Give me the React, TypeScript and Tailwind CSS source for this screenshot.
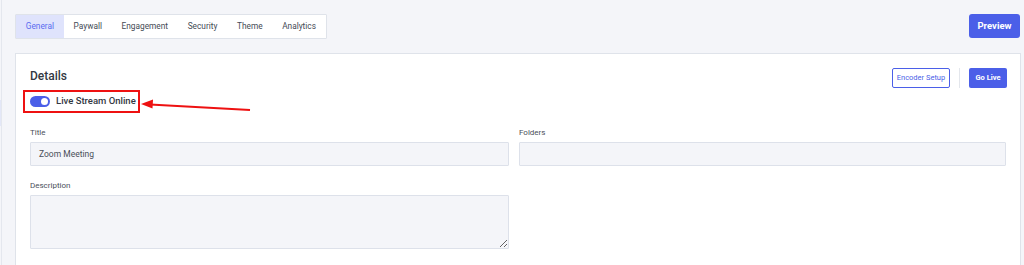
import React from 'react';

const tabs = ['General', 'Paywall', 'Engagement', 'Security', 'Theme', 'Analytics'];

const Field: React.FC<{ label: string; value?: string }> = ({ label, value }) => (
  <div className="flex flex-col">
    <label className="text-[8px] text-[#4a4f5a] mb-[3px] leading-[12px]">{label}</label>
    <div className="h-[24px] bg-[#f4f5f9] border border-[#dde1ea] rounded-[1px] px-[8px] flex items-center text-[8.5px] text-[#4a4f5a]">
      {value}
    </div>
  </div>
);

export default function App() {
  return (
    <div
      className="relative flex w-[1024px] h-[265px] overflow-hidden bg-[#f4f5f9]"
      style={{ fontFamily: 'Roboto, "Noto Sans", sans-serif' }}
    >
      {/* sidebar edge */}
      <div className="w-[2px] shrink-0 flex flex-col border-r border-[#e4e7ee]">
        <div className="h-[100px]" />
        <div className="h-[26px] bg-[#e3e7f7]" />
      </div>

      <div className="flex-1 flex flex-col pl-[13px] pr-[3px] pt-[14px]">
        {/* top bar */}
        <div className="flex items-start justify-between pr-[1px]">
          <div className="flex h-[25px] bg-white border border-[#dfe3ea] rounded-[1px]">
            {tabs.map((t, i) => (
              <div
                key={t}
                className={`flex items-center px-[9.8px] text-[8.3px] ${
                  i === 0 ? 'bg-[#dfe3fc] text-[#5a6cf0]' : 'text-[#444a55]'
                }`}
              >
                {t}
              </div>
            ))}
          </div>
          <button className="h-[24px] w-[51px] bg-[#4b5fe8] text-white text-[9.5px] font-bold rounded-[3px]">
            Preview
          </button>
        </div>

        {/* card */}
        <div className="mt-[14px] min-h-[240px] bg-white border border-[#dfe3ea] pl-[14px] pr-[14px] pt-[13px]">
          <div className="flex items-start justify-between">
            <div className="flex flex-col">
              <h2 className="text-[12px] font-medium text-[#333842] leading-[16px] mt-[1px]">Details</h2>
              <div className="mt-[6px] -ml-[7px] w-[117px] h-[23px] border-2 border-[#ee1111] flex items-center pl-[5px]">
                <div className="w-[20px] h-[11px] rounded-full bg-[#4b5fe8] flex items-center justify-end pr-[2px]">
                  <div className="w-[7px] h-[7px] rounded-full bg-white" />
                </div>
                <span className="ml-[6px] text-[9.5px] font-medium text-[#333842]">Live Stream Online</span>
              </div>
            </div>
            <div className="flex items-center mr-[-1px] mt-[1px]">
              <button className="h-[20px] w-[58px] border border-[#4b5fe8] text-[#4b5fe8] text-[7.5px] rounded-[2px] bg-white">
                Encoder Setup
              </button>
              <div className="w-px h-[20px] bg-[#e3e6ec] mx-[9px]" />
              <button className="h-[20px] w-[38px] bg-[#4b5fe8] text-white text-[7.5px] font-bold rounded-[2px]">
                Go Live
              </button>
            </div>
          </div>

          <div className="grid grid-cols-[479px_1fr] gap-x-[10px] mt-[14px]">
            <Field label="Title" value="Zoom Meeting" />
            <Field label="Folders" />
          </div>

          <div className="mt-[14px] w-[479px] flex flex-col">
            <label className="text-[8px] text-[#4a4f5a] mb-[3px] leading-[12px]">Description</label>
            <textarea
              readOnly
              className="h-[54px] bg-[#f4f5f9] border border-[#dde1ea] rounded-[1px] resize-y outline-none"
            />
          </div>
        </div>
      </div>

      {/* annotation arrow */}
      <svg className="absolute left-0 top-0 pointer-events-none" width="1024" height="265">
        <line x1="250" y1="110" x2="150" y2="104.5" stroke="#ee1111" strokeWidth="2" />
        <polygon points="141,104 153,99.5 152.5,108.5" fill="#ee1111" />
      </svg>
    </div>
  );
}
